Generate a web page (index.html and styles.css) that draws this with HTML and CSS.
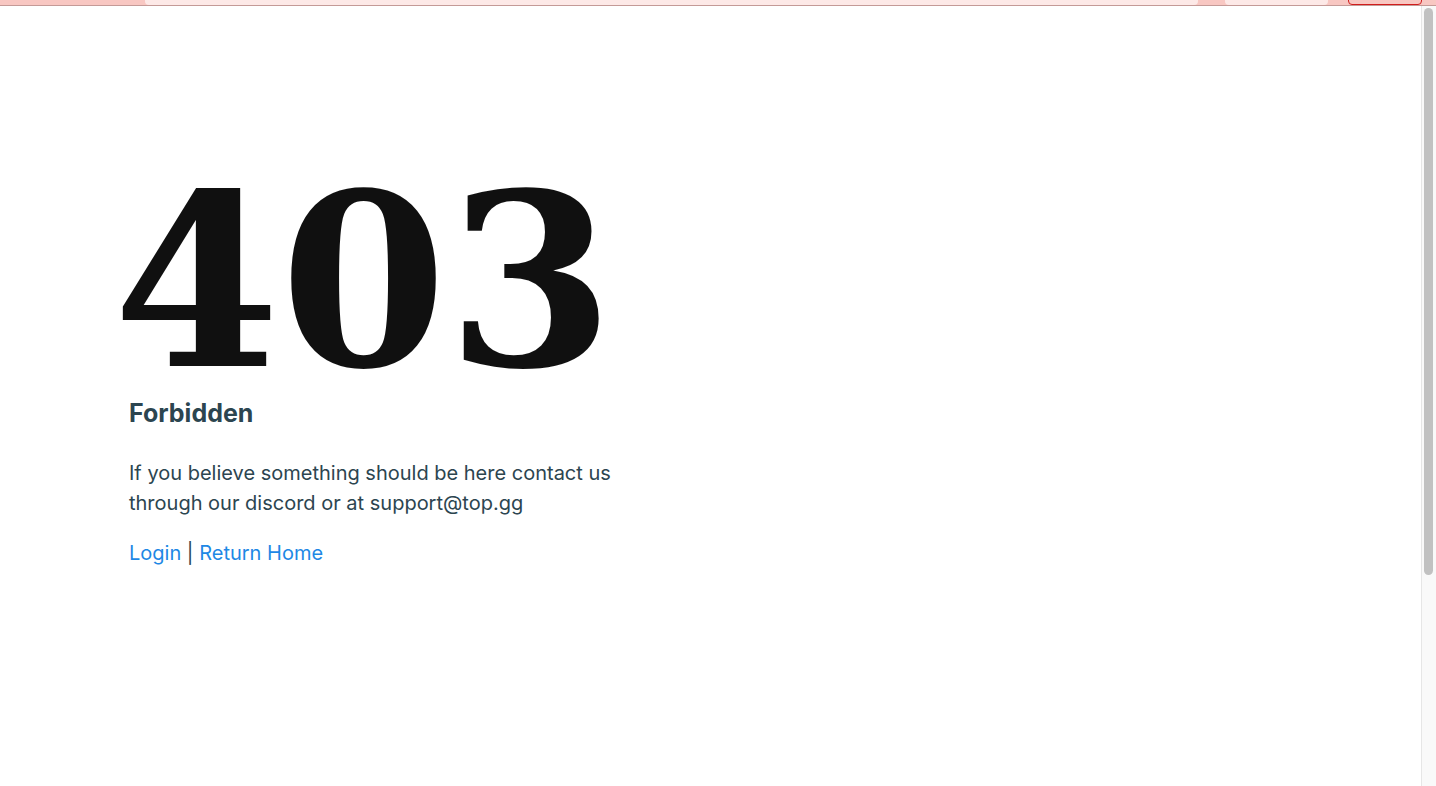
FILE: index.html
```html
<!DOCTYPE html>
<html lang="en">
<head>
<meta charset="utf-8">
<title>403 Forbidden</title>
<link rel="stylesheet" href="styles.css">
</head>
<body>
<div class="chrome">
  <div class="chrome-field chrome-url"></div>
  <div class="chrome-field chrome-small"></div>
  <div class="chrome-field chrome-red"></div>
</div>
<div class="viewport">
  <main class="page">
    <section class="error">
      <h1 class="code">403</h1>
      <h2 class="title">Forbidden</h2>
      <p class="message">If you believe something should be here contact us<br>through our discord or at support@top.gg</p>
      <p class="links"><a href="#" class="link">Login</a> <span class="sep">|</span> <a href="#" class="link">Return Home</a></p>
    </section>
  </main>
  <div class="scrollbar"><div class="thumb"></div></div>
</div>
</body>
</html>
```
FILE: styles.css
```css
html, body {
  margin: 0;
  padding: 0;
  background: #ffffff;
  height: 100%;
  overflow: hidden;
}
body {
  font-family: Inter, "Noto Sans", sans-serif;
  color: #2c4550;
  display: flex;
  flex-direction: column;
}
.chrome {
  height: 5px;
  flex: none;
  background: #f8c7c2;
  border-bottom: 1px solid #c49a97;
  display: flex;
  overflow: hidden;
}
.chrome-field {
  height: 9px;
  margin-top: -4px;
  border-radius: 4px;
  box-sizing: border-box;
}
.chrome-url {
  margin-left: 145px;
  width: 1053px;
  background: #fde9e7;
}
.chrome-small {
  margin-left: 27px;
  width: 103px;
  background: #fde9e7;
}
.chrome-red {
  margin-left: 20px;
  width: 74px;
  border: 1px solid #d01c1c;
}
.viewport {
  flex: 1;
  display: flex;
  min-height: 0;
}
.page {
  flex: 1;
  padding: 0 0 0 129px;
}
.scrollbar {
  flex: none;
  width: 15px;
  background: #f9f9f9;
  border-left: 1px solid #e6e6e6;
  padding: 2px 3px 0 2px;
  box-sizing: border-box;
}
.thumb {
  height: 567px;
  background: #c1c1c1;
  border-radius: 5px;
}
.error {
  padding-top: 168px;
}
.code {
  margin: 0 0 0 -16px;
  font-family: "DejaVu Serif", serif;
  font-weight: bold;
  font-size: 240px;
  line-height: 0.9;
  color: #101010;
  -webkit-text-stroke: 1.5px #ffffff;
  paint-order: stroke fill;
}
.title {
  margin: 8px 0 0;
  font-size: 25px;
  font-weight: 700;
  line-height: 30px;
  color: #2c4550;
}
.message {
  margin: 30px 0 0;
  font-size: 20px;
  line-height: 30px;
  color: #2c4550;
}
.links {
  margin: 20px 0 0;
  font-size: 20px;
  line-height: 30px;
}
.link {
  color: #1e88e5;
  text-decoration: none;
}
.sep {
  color: #2c4550;
}
```
